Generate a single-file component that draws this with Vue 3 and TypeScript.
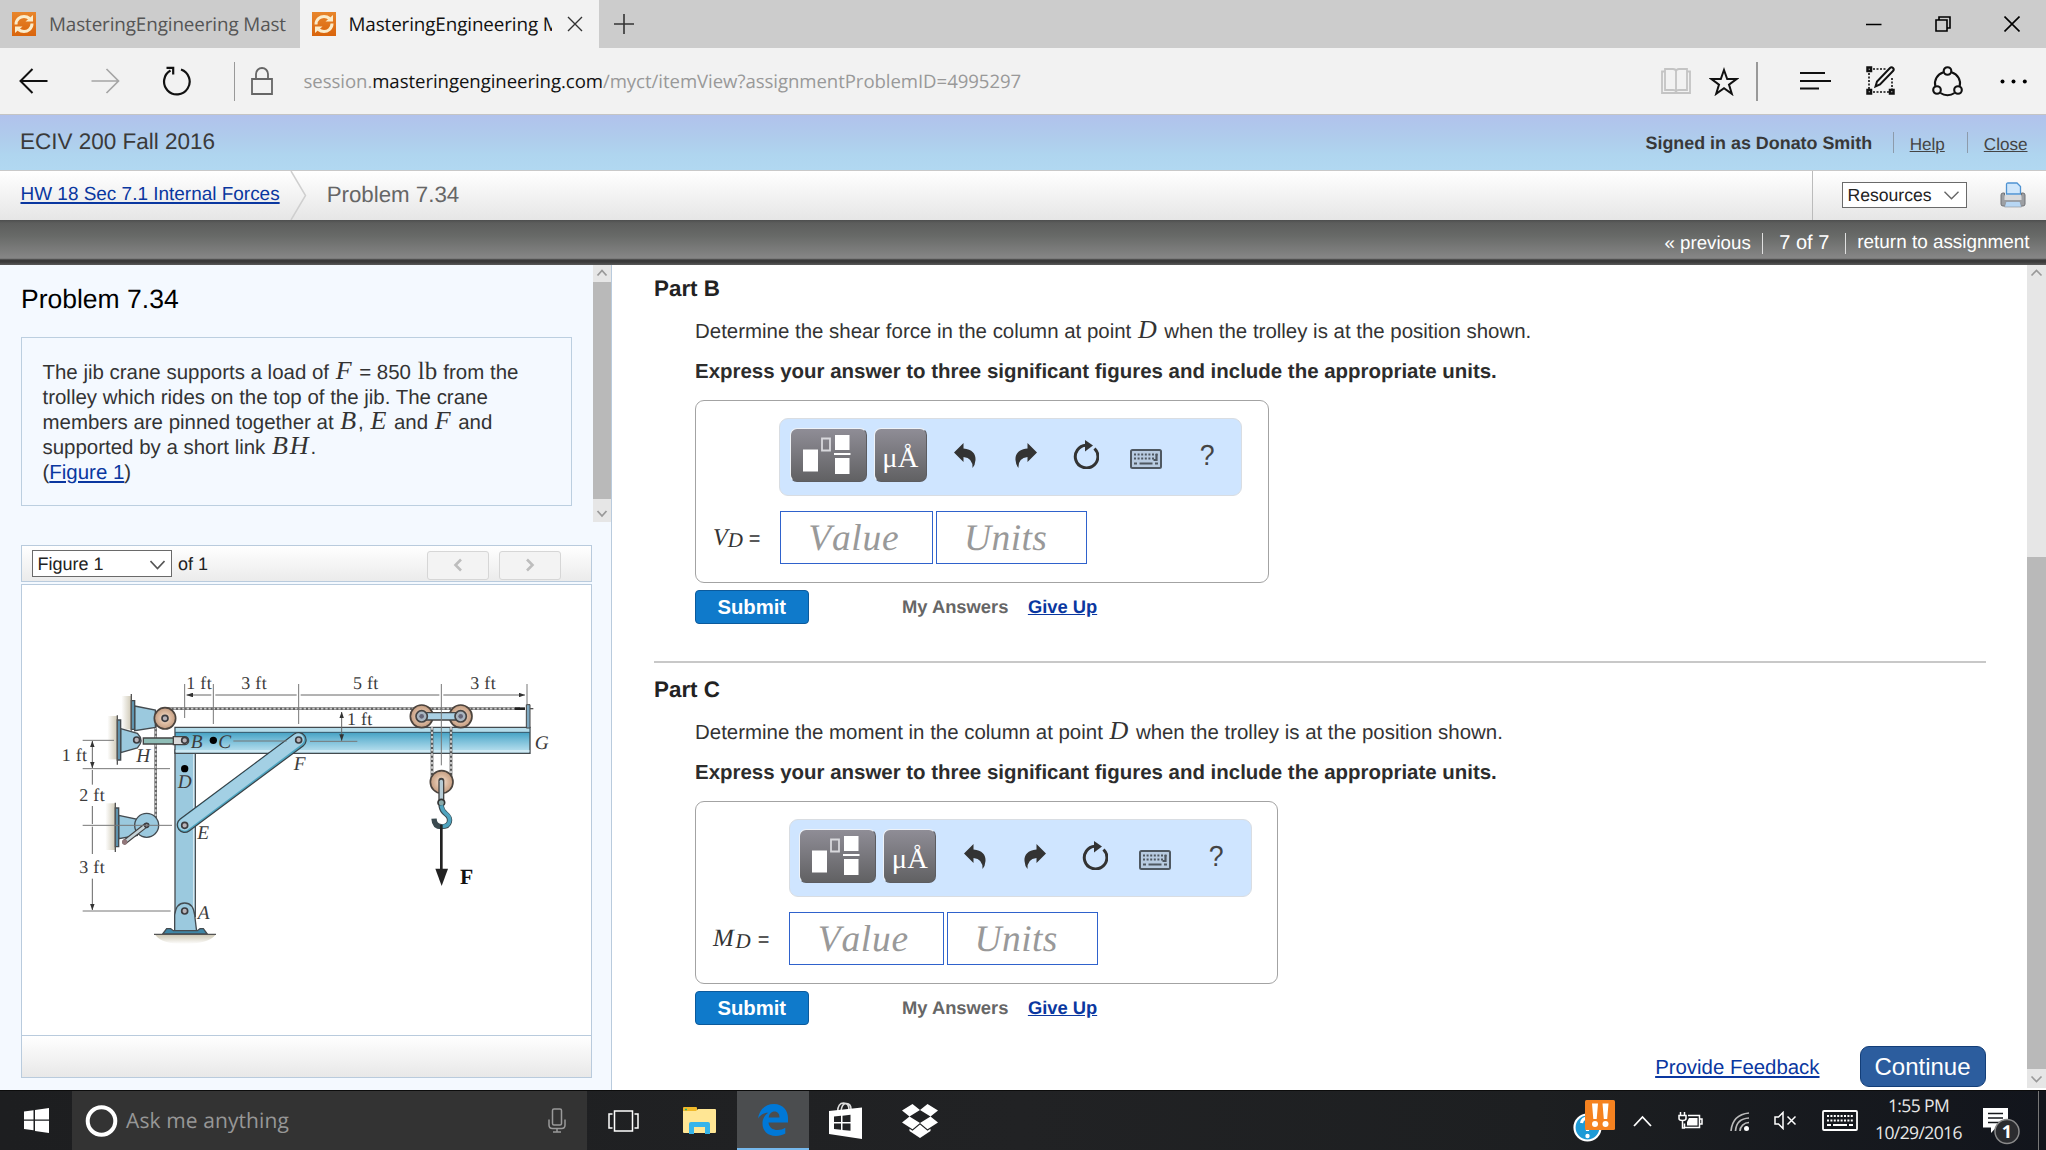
<script setup lang="ts">
interface Part {
  id: string
  title: string
  quantity: string
  symbol: string
  boxWidth: number
  labelWidth: number
  valueWidth: number
}

const parts: Part[] = [
  { id: 'b', title: 'Part B', quantity: 'shear force', symbol: 'V', boxWidth: 573.5, labelWidth: 83.3, valueWidth: 153.3 },
  { id: 'c', title: 'Part C', quantity: 'moment', symbol: 'M', boxWidth: 582.5, labelWidth: 92.8, valueWidth: 154.3 },
]

const tabs = [
  { title: 'MasteringEngineering Mast', active: false },
  { title: 'MasteringEngineering Mast', active: true },
]
</script>

<template>
  <div class="screen">
    <!-- Tab strip -->
    <div class="tabstrip">
      <div v-for="(t, i) in tabs" :key="i" class="tab" :class="{ active: t.active }">
        <svg class="fav" width="24" height="24" viewBox="0 0 24 24">
          <defs>
            <linearGradient id="fav" x1="0" y1="0" x2="0" y2="1">
              <stop offset="0" stop-color="#e8862c" /><stop offset="1" stop-color="#d9640c" />
            </linearGradient>
          </defs>
          <rect width="24" height="24" fill="url(#fav)" />
          <path d="M4 12.5C4 7 8.500 4.500 12 4.500c2.500 0 4 .7 5.500 2" fill="none" stroke="#fbeccb" stroke-width="3" />
          <path d="M13.500 9.500h7.500V3z" fill="#fbeccb" />
          <path d="M20 11.500c0 5.500-4.500 8-8 8-2.500 0-4-.7-5.500-2" fill="none" stroke="#fbeccb" stroke-width="3" />
          <path d="M10.500 14.500H3V21z" fill="#fbeccb" />
        </svg>
        <span class="tabtext">{{ t.title }}</span>
        <svg v-if="t.active" class="tabclose" width="16" height="16" viewBox="0 0 16 16">
          <path d="M1 1l14 14M15 1L1 15" stroke="#333" stroke-width="1.400" />
        </svg>
      </div>
      <svg class="plus" width="20" height="20" viewBox="0 0 20 20"><path d="M10 0v20M0 10h20" stroke="#333" stroke-width="1.600" /></svg>
      <div class="winctl">
        <svg width="16" height="16" viewBox="0 0 16 16"><path d="M0 8.500h15.500" stroke="#000" stroke-width="1.500" /></svg>
        <svg width="16" height="16" viewBox="0 0 16 16" fill="none" stroke="#000" stroke-width="1.600"><path d="M1 4h11v11H1zM4 4V1h11v11h-3" /></svg>
        <svg width="16" height="16" viewBox="0 0 16 16"><path d="M.5.5l15 15M15.500.5l-15 15" stroke="#000" stroke-width="1.600" /></svg>
      </div>
    </div>

    <!-- Address bar -->
    <div class="addr">
      <svg class="i-back" width="29" height="26" viewBox="0 0 29 26" fill="none" stroke="#111" stroke-width="2"><path d="M28.500 13H1.500M13.500 1L1.500 13l12 12" /></svg>
      <svg class="i-fwd" width="29" height="26" viewBox="0 0 29 26" fill="none" stroke="#a5a5a5" stroke-width="1.700"><path d="M.5 13h27M15.500 1l12 12-12 12" /></svg>
      <svg class="i-ref" width="30" height="30" viewBox="0 0 30 30" fill="none" stroke="#111" stroke-width="2.200">
        <path d="M19 3.500A12.800 12.800 0 1 1 8.500 4.500" /><path d="M4.500 1.800h6.700v6.700" />
      </svg>
      <i class="vline"></i>
      <svg class="i-lock" width="22" height="28" viewBox="0 0 22 28" fill="none" stroke="#666" stroke-width="1.800"><path d="M1 12h20v15H1zM5 12V7a6 6 0 0 1 12 0v5" /></svg>
      <span class="url">session.<b>masteringengineering.com</b>/myct/itemView?assignmentProblemID=4995297</span>
      <div class="addr-right">
        <svg width="30" height="28" viewBox="0 0 30 28" fill="none" stroke="#c4c4c4" stroke-width="1.800"><path d="M4 2h8q3 0 3 2.500Q15 2 18 2h8v21h-8q-3 0-3 2-0-2-3-2H4zM15 4.500V25M4 4.500H1V26h28V4.500h-3" /></svg>
        <svg class="i-star" width="30" height="29" viewBox="0 0 30 29" fill="none" stroke="#111" stroke-width="2"><path d="M15 3l3.200 9h9.300l-7.500 5.600 2.800 9.200L15 21.300l-7.800 5.500L10 17.600 2.500 12h9.300z" /></svg>
        <i class="vline"></i>
        <svg class="i-hub" width="31" height="20" viewBox="0 0 31 20" stroke="#111" stroke-width="2"><path d="M0 2h25M0 10h31M0 17.500h19" /></svg>
        <svg class="i-note" width="30" height="30" viewBox="0 0 30 30" fill="none" stroke="#111">
          <path d="M7 3h13M3 7v16M26 12v11M7 26h16" stroke-width="1.600" stroke-dasharray="2 1.500" />
          <path d="M1.500 1.500h3.500v3.500H1.500zM1.500 24h3.500v3.500H1.500zM24 24h3.500v3.500H24z" stroke-width="2.500" />
          <path d="M9.500 20.500l1.500-5L24 2q1.500-1.500 3 0t0 3L14 18.500z" stroke-width="2" />
        </svg>
        <svg class="i-share" width="31" height="31" viewBox="0 0 31 31" fill="none" stroke="#111" stroke-width="2.100">
          <circle cx="15.500" cy="5" r="3.800" /><circle cx="5" cy="24" r="3.800" /><circle cx="26" cy="24" r="3.800" />
          <path d="M11.500 6.300C5 8.500 2 14 3.300 20M19.500 6.300C26 8.500 29 14 27.700 20M8.500 27c4 3 10 3 14 0" />
        </svg>
        <svg class="i-dots" width="27" height="5" viewBox="0 0 27 5"><circle cx="2.500" cy="2.500" r="2" /><circle cx="13.500" cy="2.500" r="2" /><circle cx="24.800" cy="2.500" r="2" /></svg>
      </div>
    </div>

    <!-- Course header -->
    <div class="course">
      <span class="cname">ECIV 200 Fall 2016</span>
      <span class="signed">Signed in as Donato Smith</span>
      <i></i><a class="help">Help</a><i class="s2"></i><a class="close">Close</a>
    </div>
    <div class="crumbs">
      <a class="hw">HW 18 Sec 7.1 Internal Forces</a>
      <svg class="chev" width="17" height="49" viewBox="0 0 17 49" fill="none"><path d="M1 0l14.500 24.500L1 49" stroke="#cfcfcf" stroke-width="1.500" /></svg>
      <span class="pname">Problem 7.34</span>
      <div class="resbox">
        <div class="sel res"><span>Resources</span><svg width="15" height="9" viewBox="0 0 15 9" fill="none" stroke="#666" stroke-width="1.400"><path d="M.5.8l7 7 7-7" /></svg></div>
        <svg class="printer" width="26" height="26" viewBox="0 0 26 26">
          <path d="M6.500 12V2.500q0-1.500 1.500-1.500h9l3.500 3.500V12z" fill="#cfe6fb" stroke="#4f93d2" stroke-width="1.300" />
          <path d="M1 13q0-2 2-2h1.500v3h17v-3H23q2 0 2 2v9q0 2-2 2H3q-2 0-2-2z" fill="#9d9fa3" stroke="#707276" stroke-width="1" />
          <path d="M4.500 13h17v5h-17z" fill="#d9dadc" /><path d="M6 19.500h14l1.500 5.500h-17z" fill="#b7d6f3" stroke="#8c8f94" stroke-width=".6" />
        </svg>
      </div>
    </div>
    <div class="navbar">
      <span class="prev">« previous</span><i class="n1"></i><span class="count">7 of 7</span><i class="n2"></i><span class="ret">return to assignment</span>
    </div>

    <!-- Content -->
    <div class="content">
      <aside class="left">
        <div class="upper">
          <div class="prob">
            <h1>Problem 7.34</h1>
            <div class="stmt">
              The jib crane supports a load of <em>F</em> = 850 <em class="rm">lb</em> from the<br />
              trolley which rides on the top of the jib. The crane<br />
              members are pinned together at <em>B</em>, <em>E</em> and <em>F</em> and<br />
              supported by a short link <em>BH</em>.<br />
              (<a>Figure 1</a>)
            </div>
          </div>
          <div class="sb sbl">
            <svg class="up" width="18" height="17" viewBox="0 0 18 17" fill="none" stroke="#999" stroke-width="1.800"><path d="M4.500 10.500L9 5.500l4.500 5" /></svg>
            <div class="thumb"></div>
            <svg class="down" width="18" height="23" viewBox="0 0 18 23" fill="none" stroke="#999" stroke-width="1.800"><path d="M4.500 12L9 17l4.500-5" /></svg>
          </div>
        </div>
        <div class="figbar">
          <div class="sel fig"><span>Figure 1</span><svg width="15" height="10" viewBox="0 0 15 10" fill="none" stroke="#555" stroke-width="1.600"><path d="M.5 1l7 7.500 7-7.500" /></svg></div>
          <span class="of">of 1</span>
          <div class="pg p1"><svg width="10" height="14" viewBox="0 0 10 14" fill="none" stroke="#bdbdbd" stroke-width="2.600"><path d="M8 1.500L2.500 7 8 12.500" /></svg></div>
          <div class="pg p2"><svg width="10" height="14" viewBox="0 0 10 14" fill="none" stroke="#bdbdbd" stroke-width="2.600"><path d="M2 1.500L7.500 7 2 12.500" /></svg></div>
        </div>
        <div class="figure">
          <!-- Jib crane: one drawing unit is a third of a pixel -->
          <svg width="568" height="450" viewBox="-54 -195 1704 1350">
            <defs>
              <linearGradient id="web" x1="0" y1="0" x2="0" y2="1"><stop offset="0" stop-color="#2590b6" /><stop offset=".45" stop-color="#6fb9d5" /><stop offset="1" stop-color="#c3e5f2" /></linearGradient>
              <linearGradient id="wallg" x1="0" y1="0" x2="1" y2="0"><stop offset="0" stop-color="#fff" /><stop offset="1" stop-color="#cfc9b6" /></linearGradient>
              <linearGradient id="floorg" x1="0" y1="0" x2="0" y2="1"><stop offset="0" stop-color="#cfc9b6" /><stop offset="1" stop-color="#fff" /></linearGradient>
              <radialGradient id="wheel"><stop offset="0" stop-color="#f4e4d6" /><stop offset=".55" stop-color="#dcbaa0" /><stop offset="1" stop-color="#c39c80" /></radialGradient>
              <marker id="ar" viewBox="0 0 20 14" refX="19" refY="7" markerWidth="20" markerHeight="14" markerUnits="userSpaceOnUse" orient="auto-start-reverse"><path d="M0 0l20 7-20 7z" fill="#333" /></marker>
            </defs>
            <!-- wall shading -->
            <rect x="244" y="138" width="30" height="100" fill="url(#wallg)" />
            <rect x="202" y="198" width="30" height="130" fill="url(#wallg)" />
            <rect x="196" y="460" width="30" height="140" fill="url(#wallg)" />
            <path d="M346 855h180q-20 26-90 27t-90-27z" fill="url(#floorg)" />
            <!-- ropes -->
            <g stroke="#666" stroke-width="8" fill="none"><path d="M375 176h1065M347 205v310" /></g>
            <g stroke="#ccc" stroke-width="5" stroke-dasharray="7 6" fill="none"><path d="M375 176h1065M347 205v310" /></g>
            <!-- column -->
            <path d="M405 300h61v500h-61z" fill="#9bc9de" stroke="#4b4f52" stroke-width="4" />
            <path d="M461 312v486" stroke="#d5e9f2" stroke-width="4" />
            <!-- beam -->
            <path d="M405 232h1065v78H405z" fill="url(#web)" stroke="#434a4e" stroke-width="4" />
            <path d="M407 234h1061v12H407z" fill="#b5dcea" /><path d="M405 247h1065" stroke="#39586a" stroke-width="3" />
            <path d="M407 303h1061" stroke="#cfeaf4" stroke-width="6" />
            <path d="M1459 164h11v70h-11z" fill="#7fa9c1" stroke="#444" stroke-width="3" /><path d="M1470 176h10" stroke="#555" stroke-width="4" />
            <path d="M1425 176h30" stroke="#222" stroke-width="8" />
            <g stroke="#555" stroke-width="8" fill="none"><path d="M1176 232v155M1233 232v155" /></g>
            <g stroke="#ddd" stroke-width="5" stroke-dasharray="7 6" fill="none"><path d="M1176 232v155M1233 232v155" /></g>
            <!-- brace -->
            <path d="M434 525L776 270" stroke="#3a4247" stroke-width="48" stroke-linecap="round" />
            <path d="M434 525L776 270" stroke="#4fa5c0" stroke-width="41" stroke-linecap="round" />
            <path d="M433 524L774 268.500" stroke="#a3d0e4" stroke-width="36" stroke-linecap="round" />
            <!-- supports -->
            <g stroke="#444b50" stroke-width="4" fill="#9bc9de">
              <path d="M284 168l62 12v52l-62 10z" /><path d="M274 152h10v86h-10z" fill="#5f93ae" />
              <path d="M242 236l50 14q22 22 0 44l-50 14z" /><path d="M232 210h10v120h-10z" fill="#5f93ae" />
              <path d="M236 496l56 12v48l-56 10z" /><path d="M226 474h10v116h-10z" fill="#5f93ae" />
              <circle cx="320" cy="526" r="36" />
              <path d="M404 845V795q4-36 30-36t30 36l6 50z" /><path d="M368 852l12-16h12l8 6h72l8-6h10l12 16z" fill="#3f86a6" />
            </g>
            <path d="M274 132v110M232 196v148M226 458v148M342 853h186" stroke="#555" stroke-width="4" />
            <circle cx="375" cy="205" r="32" fill="url(#wheel)" stroke="#4c443e" stroke-width="5" />
            <path d="M310 264h92v18h-92z" fill="#8fbdb6" stroke="#444" stroke-width="4" />
            <path d="M400 260h34a12 12 0 0 1 0 24h-34z" fill="#d9d9d9" stroke="#444" stroke-width="4" />
            <path d="M318 526L254 576" stroke="#444" stroke-width="15" stroke-linecap="round" /><path d="M318 526L254 576" stroke="#c5d3d8" stroke-width="8" stroke-linecap="round" />
            <circle cx="254" cy="576" r="8" fill="#92777a" />
            <g fill="#b9b3b8" stroke="#3c3c40" stroke-width="5">
              <circle cx="375" cy="205" r="9" /><circle cx="290" cy="270" r="9" /><circle cx="434" cy="271" r="9" /><circle cx="776" cy="270" r="9" /><circle cx="434" cy="526" r="9" /><circle cx="434" cy="783" r="9" /><circle cx="320" cy="526" r="6" />
            </g>
            <!-- trolley and hook -->
            <g stroke="#4c443e" stroke-width="5" fill="url(#wheel)"><circle cx="1145" cy="199" r="34" /><circle cx="1262" cy="199" r="34" /><circle cx="1205" cy="396" r="34" /></g>
            <path d="M1145 188h117v22h-117z" fill="#a9d0e4" stroke="#444" stroke-width="4" />
            <g fill="#a9b5c0" stroke="#444" stroke-width="5"><circle cx="1145" cy="199" r="17" /><circle cx="1262" cy="199" r="17" /></g>
            <circle cx="1145" cy="199" r="7" fill="#667" /><circle cx="1262" cy="199" r="7" fill="#667" />
            <path d="M1204 392v66" stroke="#444" stroke-width="18" stroke-linecap="round" /><path d="M1204 394v62" stroke="#b6ccd6" stroke-width="10" stroke-linecap="round" />
            <circle cx="1204" cy="458" r="10" fill="#8aa" stroke="#333" stroke-width="5" />
            <path d="M1203 466q2 16 15 26t10 24-24 14-22-24" fill="none" stroke="#3b4a50" stroke-width="16" />
            <path d="M1204 466q2 16 15 26t9 24-22 13" fill="none" stroke="#4fa3be" stroke-width="11" />
            <path d="M1204 525v140" stroke="#222" stroke-width="8" /><path d="M1186 656h38l-19 52z" fill="#222" />
            <!-- dimension lines -->
            <g stroke="#777" stroke-width="3" fill="none">
              <path d="M434 102v102M520 102v120M776 102v120M1204 102v244M1461 102v60" />
              <path d="M128 271h94M128 356h262M128 526h268M128 783h264M580 273h160M810 274h142" />
            </g>
            <g stroke="#666" stroke-width="3" fill="none">
              <path d="M440 135h74M526 135h244M782 135h416M1210 135h245" marker-start="url(#ar)" marker-end="url(#ar)" />
              <path d="M905 186v86" marker-start="url(#ar)" marker-end="url(#ar)" />
              <path d="M157 273v81" marker-start="url(#ar)" marker-end="url(#ar)" />
              <path d="M157 404v-44M157 468v54M157 612v-82M157 686v94" marker-end="url(#ar)" />
            </g>
            <circle cx="434" cy="356" r="11" /><circle cx="520" cy="271" r="11" />
            <g class="dim"><text x="439" y="117">1 ft</text><text x="604" y="117">3 ft</text><text x="939" y="118">5 ft</text><text x="1291" y="118">3 ft</text><text x="921" y="226">1 ft</text><text x="65" y="332">1 ft</text><text x="118" y="454">2 ft</text><text x="118" y="670">3 ft</text></g>
            <g class="pt"><text x="452" y="295">B</text><text x="535" y="295">C</text><text x="289" y="337">H</text><text x="761" y="360">F</text><text x="413" y="415">D</text><text x="472" y="568">E</text><text x="473" y="806">A</text><text x="1484" y="296">G</text></g>
            <text class="force" x="1260" y="703">F</text>
          </svg>
        </div>
        <div class="figfoot"></div>
      </aside>

      <main class="main">
        <div class="mcol">
          <section v-for="(p, i) in parts" :key="p.id">
            <div v-if="i > 0" class="hr"></div>
            <h2>{{ p.title }}</h2>
            <p class="ask">Determine the {{ p.quantity }} in the column at point <em>D</em> when the trolley is at the position shown.</p>
            <p class="ask strong">Express your answer to three significant figures and include the appropriate units.</p>
            <div class="answer" :style="{ width: p.boxWidth + 'px' }">
              <div class="tools" :style="{ marginLeft: p.labelWidth + 'px' }">
                <div class="btn w1">
                  <svg width="76" height="53" viewBox="0 0 76 53"><path d="M12 20.500h15v22H12zM44 6h14.500v15H44zM44 29h14.500v16H44zM43 24h16.500v2H43z" fill="#fff" /><path d="M31 9.500h8v12h-8z" fill="none" stroke="#d8d8dc" stroke-width="1.800" /></svg>
                </div>
                <div class="btn w2">μÅ</div>
                <svg class="t-undo" width="22" height="25" viewBox="0 0 22 25"><path d="M0 9.500L9.500 0v5.500C18 6 22 11 21.500 17q-.3 5-3 8 .5-10-9-11V19z" fill="#333" /></svg>
                <svg class="t-redo" width="22" height="25" viewBox="0 0 22 25"><path d="M22 9.500L12.500 0v5.500C4 6 0 11 .5 17q.3 5 3 8-.5-10 9-11V19z" fill="#333" /></svg>
                <svg class="t-reset" width="26" height="29" viewBox="0 0 26 29"><path d="M21.500 8.500A11.300 11.300 0 1 1 13 5.300" fill="none" stroke="#333" stroke-width="3" /><path d="M12 0l8 5.500-8 6z" fill="#333" /></svg>
                <svg class="t-key" width="32" height="20" viewBox="0 0 32 20"><rect x="1" y="1" width="30" height="18" rx="1.500" fill="#b8cbe0" stroke="#4f5861" stroke-width="2" /><path d="M4 5.500h24M4 9.500h20" stroke="#4f5861" stroke-width="2" stroke-dasharray="2 1.600" /><path d="M4 14.500h3M9.500 14.500h13M25 14.500h3M26.500 5v6h-3" stroke="#4f5861" stroke-width="2.200" fill="none" /></svg>
                <span class="q">?</span>
              </div>
              <div class="entry">
                <span class="sym" :style="{ width: p.labelWidth + .5 + 'px' }"><i :class="p.symbol">{{ p.symbol }}</i><i class="sub">D</i><span class="eq">=</span></span>
                <div class="inp v" :style="{ width: p.valueWidth + 'px' }">Value</div>
                <div class="inp u">Units</div>
              </div>
            </div>
            <div class="actions"><button>Submit</button><span>My Answers</span><a>Give Up</a></div>
          </section>
          <div class="foot"><a>Provide Feedback</a><button>Continue</button></div>
        </div>
        <div class="sb sbr">
          <svg class="up" width="19" height="17" viewBox="0 0 19 17" fill="none" stroke="#999" stroke-width="1.600"><path d="M4.500 10.500L9.500 5.500l5 5" /></svg>
          <div class="thumb"></div>
          <svg class="down" width="19" height="19" viewBox="0 0 19 19" fill="none" stroke="#999" stroke-width="1.600"><path d="M4.500 7.500L9.500 12.500l5-5" /></svg>
        </div>
      </main>
    </div>

    <!-- Taskbar -->
    <div class="taskbar">
      <svg class="win" width="25" height="25" viewBox="0 0 25 25" fill="#fff"><path d="M0 3.500L9.500 2.200v9.300H0zM11 2L25 0v11.500H11zM0 12.800h9.500v9.400L0 21zM11 12.800h14V25l-14-2z" /></svg>
      <div class="search">
        <svg width="33" height="34" viewBox="0 0 33 34" fill="none" stroke="#fff" stroke-width="4"><circle cx="16.500" cy="17" r="13.800" /></svg>
        <span>Ask me anything</span>
        <svg class="mic" width="18" height="25" viewBox="0 0 18 25" fill="none" stroke="#9a9a9a" stroke-width="1.500"><rect x="4.500" y="1" width="9" height="16" rx="1.500" /><path d="M1 11.500V17q0 3.500 3.500 3.500h9Q17 20.500 17 17v-5.500M9 20.500V24M5 24h8" /></svg>
      </div>
      <svg class="tv" width="31" height="22" viewBox="0 0 31 22" fill="none" stroke="#fff" stroke-width="1.500"><path d="M6.500 1h18v20h-18zM4.500 4H1v14h3.500M26.500 4H30v14h-3.500" /></svg>
      <svg class="ex" width="33" height="28" viewBox="0 0 33 28"><path d="M0 1q0-1 1-1h12q1 0 1 1v5H0z" fill="#f0b92a" /><path d="M0 4h13l2-2h17q1 0 1 1v22q0 1-1 1H1q-1 0-1-1z" fill="#ffe694" /><path d="M6 26V17q0-2 2-2h17q2 0 2 2v10h-5v-7H11v7H6z" fill="#35b4ea" /><path d="M2 2.500h2" stroke="#2bb673" stroke-width="1.500" /></svg>
      <div class="edge"><svg width="30" height="32" viewBox="0 0 30 32"><path d="M0 14.500C1.500 5 8 0 16 0c9 0 14 6.500 14 14v4.500H10.500c.3 5 4.500 7.500 9 7.500 3 0 5.500-.8 7.800-2.200v5.800C24.500 31.200 21.500 32 18 32 9.500 32 4.500 26.500 4.500 19.500c0-5 2.500-8.700 6-10.700C6.500 8.500 2.500 10.500 0 14.500zM10.700 13.500h10.800c0-3.500-1.700-6-5-6-3.200 0-5.300 2.500-5.800 6z" fill="#0078d7" /></svg></div>
      <svg class="store" width="33" height="37" viewBox="0 0 33 37"><path d="M8.500 10Q9 1 14.500 1T20 8M12 9q1-8 5.500-7.500T22 7" fill="none" stroke="#ddd" stroke-width="1.600" /><path d="M0 9L33 5.500V37L0 32z" fill="#fff" /><path d="M5 14.500l7-.7v6.200H5zM13.500 13.700l8-.9V20h-8zM5 21.500h7v6.300l-7-.7zM13.500 21.500h8v7.300l-8-.8z" fill="#222325" /></svg>
      <svg class="db" width="36" height="34" viewBox="0 0 36 34" fill="#fff"><path d="M10.500 0L0 6.500l7.500 6L18 6zM25.500 0L36 6.500l-7.500 6L18 6zM0 18.500l7.500-6L18 19l-7.500 6.200zM36 18.500l-7.500-6L18 19l7.500 6.200zM18 20.500l-7.500 6.200-3-2V27L18 34l10.500-7v-2.300l-3 2z" /></svg>
      <div class="tray">
        <svg class="alert" width="42" height="42" viewBox="0 0 42 42"><circle cx="14.500" cy="27.500" r="13" fill="#1d9ad6" stroke="#fff" stroke-width="2.200" /><path d="M8.500 23q1-5 6-5M14.500 25v6" stroke="#fff" stroke-width="3.200" fill="none" /><circle cx="14.500" cy="36" r="2.200" fill="#fff" /><rect x="12" width="30" height="30" rx="1.500" fill="#f58220" /><path d="M19 3.500h6l-1.300 15.500h-3.400zM29.500 3.500h6l-1.300 15.500h-3.400z" fill="#fff" /><circle cx="22" cy="24" r="3" fill="#fff" /><circle cx="32.500" cy="24" r="3" fill="#fff" /></svg>
        <svg class="caret" width="19" height="12" viewBox="0 0 19 12" fill="none" stroke="#fff" stroke-width="1.800"><path d="M1 11l8.500-9L18 11" /></svg>
        <svg class="bat" width="25" height="18" viewBox="0 0 25 18" fill="none" stroke="#fff" stroke-width="1.500"><path d="M10 3.500h11.500v12h-15v-4M22 7h2v5h-2M2.500 0v3M6.500 0v3M1 3.500h7v3q0 2-3.500 2T1 6.500zM4.500 8.500V16H7" /><path d="M11 6h8.500v7.500H9V10z" fill="#fff" stroke="none" /></svg>
        <svg class="wifi" width="20" height="20" viewBox="0 0 20 20" fill="none" stroke="#bbb" stroke-width="1.700"><path d="M1 19C2 8 9 2 19 1M5.500 19C6 11 11 6.500 19 6M10 19c0-4.500 4-8.500 9-8.500" /><circle cx="16.500" cy="16.500" r="2.500" fill="#fff" stroke="none" /></svg>
        <svg class="vol" width="23" height="19" viewBox="0 0 23 19" fill="none" stroke="#fff" stroke-width="1.500"><path d="M1 6v7h3.500L9 17.500v-16L4.500 6zM13.500 5.500l8 8M21.500 5.500l-8 8" /></svg>
        <svg class="kb" width="36" height="21" viewBox="0 0 36 21" fill="none" stroke="#fff" stroke-width="1.800"><rect x="1" y="1" width="34" height="19" rx="1" /><path d="M5 6h26M5 10.500h26" stroke-dasharray="2 1.400" /><path d="M5 15h4M11 15h14M27 15h4" /></svg>
        <div class="clock"><span>1:55 PM</span><span class="date">10/29/2016</span></div>
        <div class="notif">
          <svg width="38" height="38" viewBox="0 0 38 38"><path d="M0 0h25v19.500H13L8 25v-5.500H0z" fill="#fff" /><path d="M5 5.500h15M5 10h15M5 14.500h11" stroke="#16181c" stroke-width="1.700" /><circle cx="24" cy="23.500" r="12" fill="#2b2c2f" stroke="#8a8a8a" stroke-width="1.500" /><text x="24" y="29.500" text-anchor="middle">1</text></svg>
        </div>
        <i class="desk"></i>
      </div>
    </div>
  </div>
</template>

<style>
body { margin: 0; overflow: hidden; }
</style>
<style scoped>
* { box-sizing: border-box; }
.screen { width: 2046px; height: 1150px; display: flex; flex-direction: column; background: #fff; font-family: "Liberation Sans", Arial, sans-serif; color: #333; overflow: hidden; text-rendering: geometricPrecision; white-space: nowrap; }
svg { display: block; flex: none; }
i { flex: none; }
a { text-decoration: underline; color: #0a37a0; }

.tabstrip { height: 48px; background: #ccc; display: flex; align-items: center; flex: none; font-family: "Open Sans", "Noto Sans", sans-serif; }
.tab { width: 299.500px; height: 48px; display: flex; align-items: center; padding-left: 12px; color: #555; font-size: 18.850px; }
.tab.active { background: #f2f2f2; color: #111; }
.tabtext { margin-left: 13px; letter-spacing: -.12px; line-height: 26px; }
.active .tabtext { width: 203px; overflow: hidden; }
.tabclose { margin-left: 15px; }
.plus { margin-left: 15px; }
.winctl { display: flex; margin-left: auto; gap: 53px; padding-right: 26.500px; }

.addr { height: 67px; background: #f2f2f2; border-bottom: 1.500px solid #c4c4c4; display: flex; align-items: center; flex: none; padding-left: 19px; }
.i-fwd { margin-left: 43px; }
.i-ref { margin-left: 42px; }
.vline { width: 1.500px; height: 39px; background: #999; }
.i-ref + .vline { margin-left: 41.500px; }
.i-lock { margin-left: 15.500px; }
.url { font-family: "Open Sans", "Noto Sans", sans-serif; font-size: 18.600px; margin-left: 31px; color: #999; letter-spacing: -.06px; padding-top: 1.500px; }
.url b { font-weight: 400; color: #111; }
.addr-right { display: flex; align-items: center; margin-left: auto; padding-right: 19.500px; }
.i-star { margin-left: 18px; margin-right: 17px; }
.i-hub { margin-left: 42px; }
.i-note { margin-left: 35px; }
.i-share { margin-left: 36px; }
.i-dots { margin-left: 37px; }

.course { height: 54.500px; flex: none; display: flex; align-items: center; background: linear-gradient(#b1c2ec 0%, #afcdec 45%, #afd5ef 72%, #b1d8f1 100%); padding: 0 18.500px 0 20px; }
.cname { font-size: 22.500px; color: #3a3a3a; }
.signed { margin-left: auto; font-weight: 700; font-size: 17.900px; padding-top: 3px; color: #383838; }
.course i { width: 1.500px; height: 21px; background: #8d9bab; margin-left: 20.500px; }
.course i.s2 { margin-left: 22px; }
.course a { font-size: 17.100px; color: #444; margin-left: 15.500px; padding-top: 4.500px; }

.crumbs { height: 50px; flex: none; display: flex; align-items: center; border-top: 1.500px solid #c9c9c9; background: linear-gradient(#fff, #e6e6e6); padding-left: 20.500px; }
.hw { font-size: 18.970px; text-decoration-thickness: 1.500px; text-underline-offset: 2px; }
.chev { margin-left: 10px; }
.pname { font-size: 22.300px; margin-left: 20px; color: #666; }
.resbox { margin-left: auto; width: 234.500px; height: 49px; border-left: 1.500px solid #bbb; display: flex; align-items: center; padding-left: 29px; }
.sel { background: #fff; border: 1.500px solid #6a6a6a; display: flex; align-items: center; justify-content: space-between; color: #222; }
.res { width: 125px; height: 26px; font-size: 17.600px; padding: 1px 7px 0 5px; }
.printer { margin-left: 33px; }

.navbar { height: 45.500px; flex: none; display: flex; align-items: center; justify-content: flex-end; background: linear-gradient(#4d4e4e 0, #5c5d5c 3px, #686a68 16px, #868686 38px, #7a7a7a 38.500px, #3a3a3a 40px, #3a3a3a 42px, #5a5a5a 45px); color: #fff; font-size: 18.900px; padding: 1.500px 16.500px 0 0; }
.navbar i { width: 1.500px; height: 21px; background: #e0e0e0; }
.prev { font-size: 18.700px; }
.n1 { margin-left: 11px; }
.count { font-size: 20px; margin-left: 16px; }
.n2 { margin-left: 15.500px; }
.ret { margin-left: 11px; }

.content { height: 824.500px; flex: none; display: flex; }
.left { width: 612px; background: #f4f9ff; border-right: 1.500px solid #b9cbdd; flex: none; }
.upper { display: flex; height: 257px; }
.prob { width: 592.500px; padding-left: 21px; }
h1 { font-size: 26.500px; font-weight: 400; color: #000; margin: 18px 0 0; line-height: 32px; }
.stmt { width: 551px; height: 169px; margin-top: 22px; border: 1.500px solid #bccfe0; padding: 21.700px 0 0 20.500px; font-size: 20.470px; line-height: 25.100px; }
em { font-family: "Liberation Serif", "Times New Roman", serif; font-style: italic; font-size: 26px; line-height: 0; letter-spacing: 1.900px; margin-left: 1px; }
em.rm { font-style: normal; font-size: 25px; letter-spacing: .3px; }
.sb { background: #e6e6e6; display: flex; flex-direction: column; }
.sbl { width: 18px; }
.thumb { background: #b9b9b9; }
.sbl .thumb { flex: 1; }
.figbar { width: 570.500px; height: 37.500px; margin: 22.700px 0 0 21px; border: 1.500px solid #b9cbdd; background: linear-gradient(#fff, #ebebeb); display: flex; align-items: center; padding-left: 9.500px; }
.fig { width: 140.500px; height: 27px; font-size: 18px; padding: 2px 6px 0 5px; margin-top: 1px; }
.of { font-size: 18px; margin-left: 6px; color: #222; padding-top: 2px; }
.pg { width: 62px; height: 29px; border: 1.500px solid #d6d6d6; border-radius: 3px; display: flex; align-items: center; justify-content: center; background: #f3f3f3; margin-top: 3.500px; }
.p1 { margin-left: 219px; }
.p2 { margin-left: 10px; }
.figure { width: 570.500px; height: 452.500px; margin: 1.500px 0 0 21px; border: 1.500px solid #b9cbdd; background: #fff; }
.figfoot { width: 570.500px; height: 41.500px; margin-left: 21px; border: 1.500px solid #b9cbdd; border-top: 0; background: linear-gradient(#fff, #e8e8e8); }
.dim { font: 54px "Liberation Serif", serif; letter-spacing: .8px; fill: #3c3c3c; }
.pt { font: italic 58px "Liberation Serif", serif; fill: #3c3c3c; }
.force { font: bold 65px "Liberation Serif", serif; fill: #111; }

.main { flex: 1; display: flex; justify-content: space-between; }
.mcol { width: 1331.500px; margin-left: 42px; padding-top: 11px; }
h2 { font-size: 22.400px; line-height: 26px; margin: 0; color: #222; }
.ask { margin: 17.200px 0 0 41px; font-size: 20.440px; line-height: 25px; }
.strong { font-weight: 700; margin-top: 15.200px; color: #2c2c2c; }
.answer { margin: 15.600px 0 0 41px; height: 183.500px; border: 1.500px solid #a3a3a3; border-radius: 9px; padding-top: 17px; }
.tools { width: 463px; height: 78.500px; background: #cfe5ff; border: 1.500px solid #d9dde2; border-radius: 9px; display: flex; padding: 9.500px 0 0 9.500px; }
.btn { height: 54px; border-radius: 7px; background: linear-gradient(#8f8d96, #616163); border: 1.500px solid #eef2f7; border-right-color: #5c5c60; border-bottom-color: #5c5c60; color: #fff; }
.w1 { width: 77px; }
.w2 { width: 53px; margin-left: 7px; font: 28.500px/60px "Liberation Serif", serif; text-align: center; }
.t-undo { margin: 14.500px 0 0 27.500px; }
.t-redo { margin: 14.500px 0 0 38.500px; }
.t-reset { margin: 12px 0 0 36px; }
.t-key { margin: 20.500px 0 0 31px; }
.q { font-size: 29px; line-height: 30px; margin: 12.500px 0 0 37px; color: #444; transform: scaleX(.92); }
.entry { display: flex; margin-top: 14.200px; height: 53.500px; }
.sym { display: block; padding: 13.200px 0 0 17px; font-family: "Liberation Serif", serif; line-height: 28px; font-size: 24px; color: #333; }
.M { font-size: 25px; letter-spacing: 1.700px; }
.M ~ .eq { margin-left: 7px; }
.sub { font-size: 21px; position: relative; top: 2.500px; }
.eq { font-family: "Liberation Sans", sans-serif; font-size: 20px; margin-left: 6px; }
.inp { border: 1.500px solid #2f62cc; height: 53.500px; font: italic 37.500px/50px "Liberation Serif", serif; font-kerning: none; letter-spacing: .7px; color: #999; background: #fff; }
.v { padding: 2.800px 0 0 27.500px; }
.u { width: 151px; margin-left: 3px; padding: 2.800px 0 0 27px; letter-spacing: .4px; }
.actions { display: flex; align-items: center; margin: 6.500px 0 0 41px; height: 34.500px; font-weight: 700; font-size: 18.350px; color: #666; }
.actions button { width: 113.500px; height: 34.500px; border: 1.500px solid #0b5a9c; border-radius: 4px; background: #0f7acb; color: #fff; font: 700 20.300px "Liberation Sans", sans-serif; padding: 0; }
.actions span { margin-left: 93.500px; padding-top: .5px; }
.actions a { margin-left: 19.500px; padding-top: .5px; }
.hr { height: 2.500px; background: #c8c8c8; margin: 36.500px 0 13.500px; }
.foot { display: flex; justify-content: flex-end; align-items: center; margin-top: 21px; }
.foot a { font-size: 20.400px; padding-top: 3.500px; }
.foot button { width: 126px; height: 41px; margin-left: 40px; border: 1.500px solid #133e78; border-radius: 9px; background: #2c5d9e; color: #fff; font: 24px "Liberation Sans", sans-serif; padding: 0; }
.sbr { width: 19.500px; height: 823px; }
.sbr .thumb { margin-top: 275px; flex: 1; }

.taskbar { flex: 1; background: linear-gradient(90deg, #1d1e20 0, #212224 50%, #1d1f21 75%, #12151c 100%); border-top: 1px solid #0c0c0c; display: flex; align-items: center; font-family: "Open Sans", "Noto Sans", sans-serif; }
.win { margin-left: 23.500px; }
.search { width: 515px; height: 60px; margin-left: 23px; background: #333; display: flex; align-items: center; padding-left: 13.500px; color: #979797; font-size: 21px; }
.search span { margin-left: 8px; letter-spacing: .1px; padding-top: 1px; }
.mic { margin-left: auto; margin-right: 21px; }
.tv { margin-left: 21px; }
.ex { margin-left: 44px; }
.edge { width: 72px; height: 60px; margin-left: 21px; background: #4b4d4f; border-bottom: 3px solid #76b9ed; display: flex; align-items: center; justify-content: center; padding-top: 2px; }
.store { margin-left: 20px; }
.db { margin-left: 40px; }
.tray { margin-left: auto; display: flex; align-items: center; height: 60px; }
.caret { margin-left: 18px; }
.bat { margin-left: 26px; }
.wifi { margin-left: 27px; margin-top: 3px; }
.vol { margin-left: 24px; }
.kb { margin-left: 25px; }
.clock { margin-left: 17.500px; width: 87px; display: flex; flex-direction: column; align-items: center; color: #e8e8e8; font-size: 17.500px; line-height: 26.500px; letter-spacing: -.6px; padding-bottom: 1.500px; }
.notif { margin-left: 21px; padding-top: 12px; }
.notif text { font: 700 18px "Open Sans", sans-serif; fill: #fff; }
.desk { width: 1.500px; height: 60px; background: #777; margin: 0 7px 0 16.500px; }
</style>
